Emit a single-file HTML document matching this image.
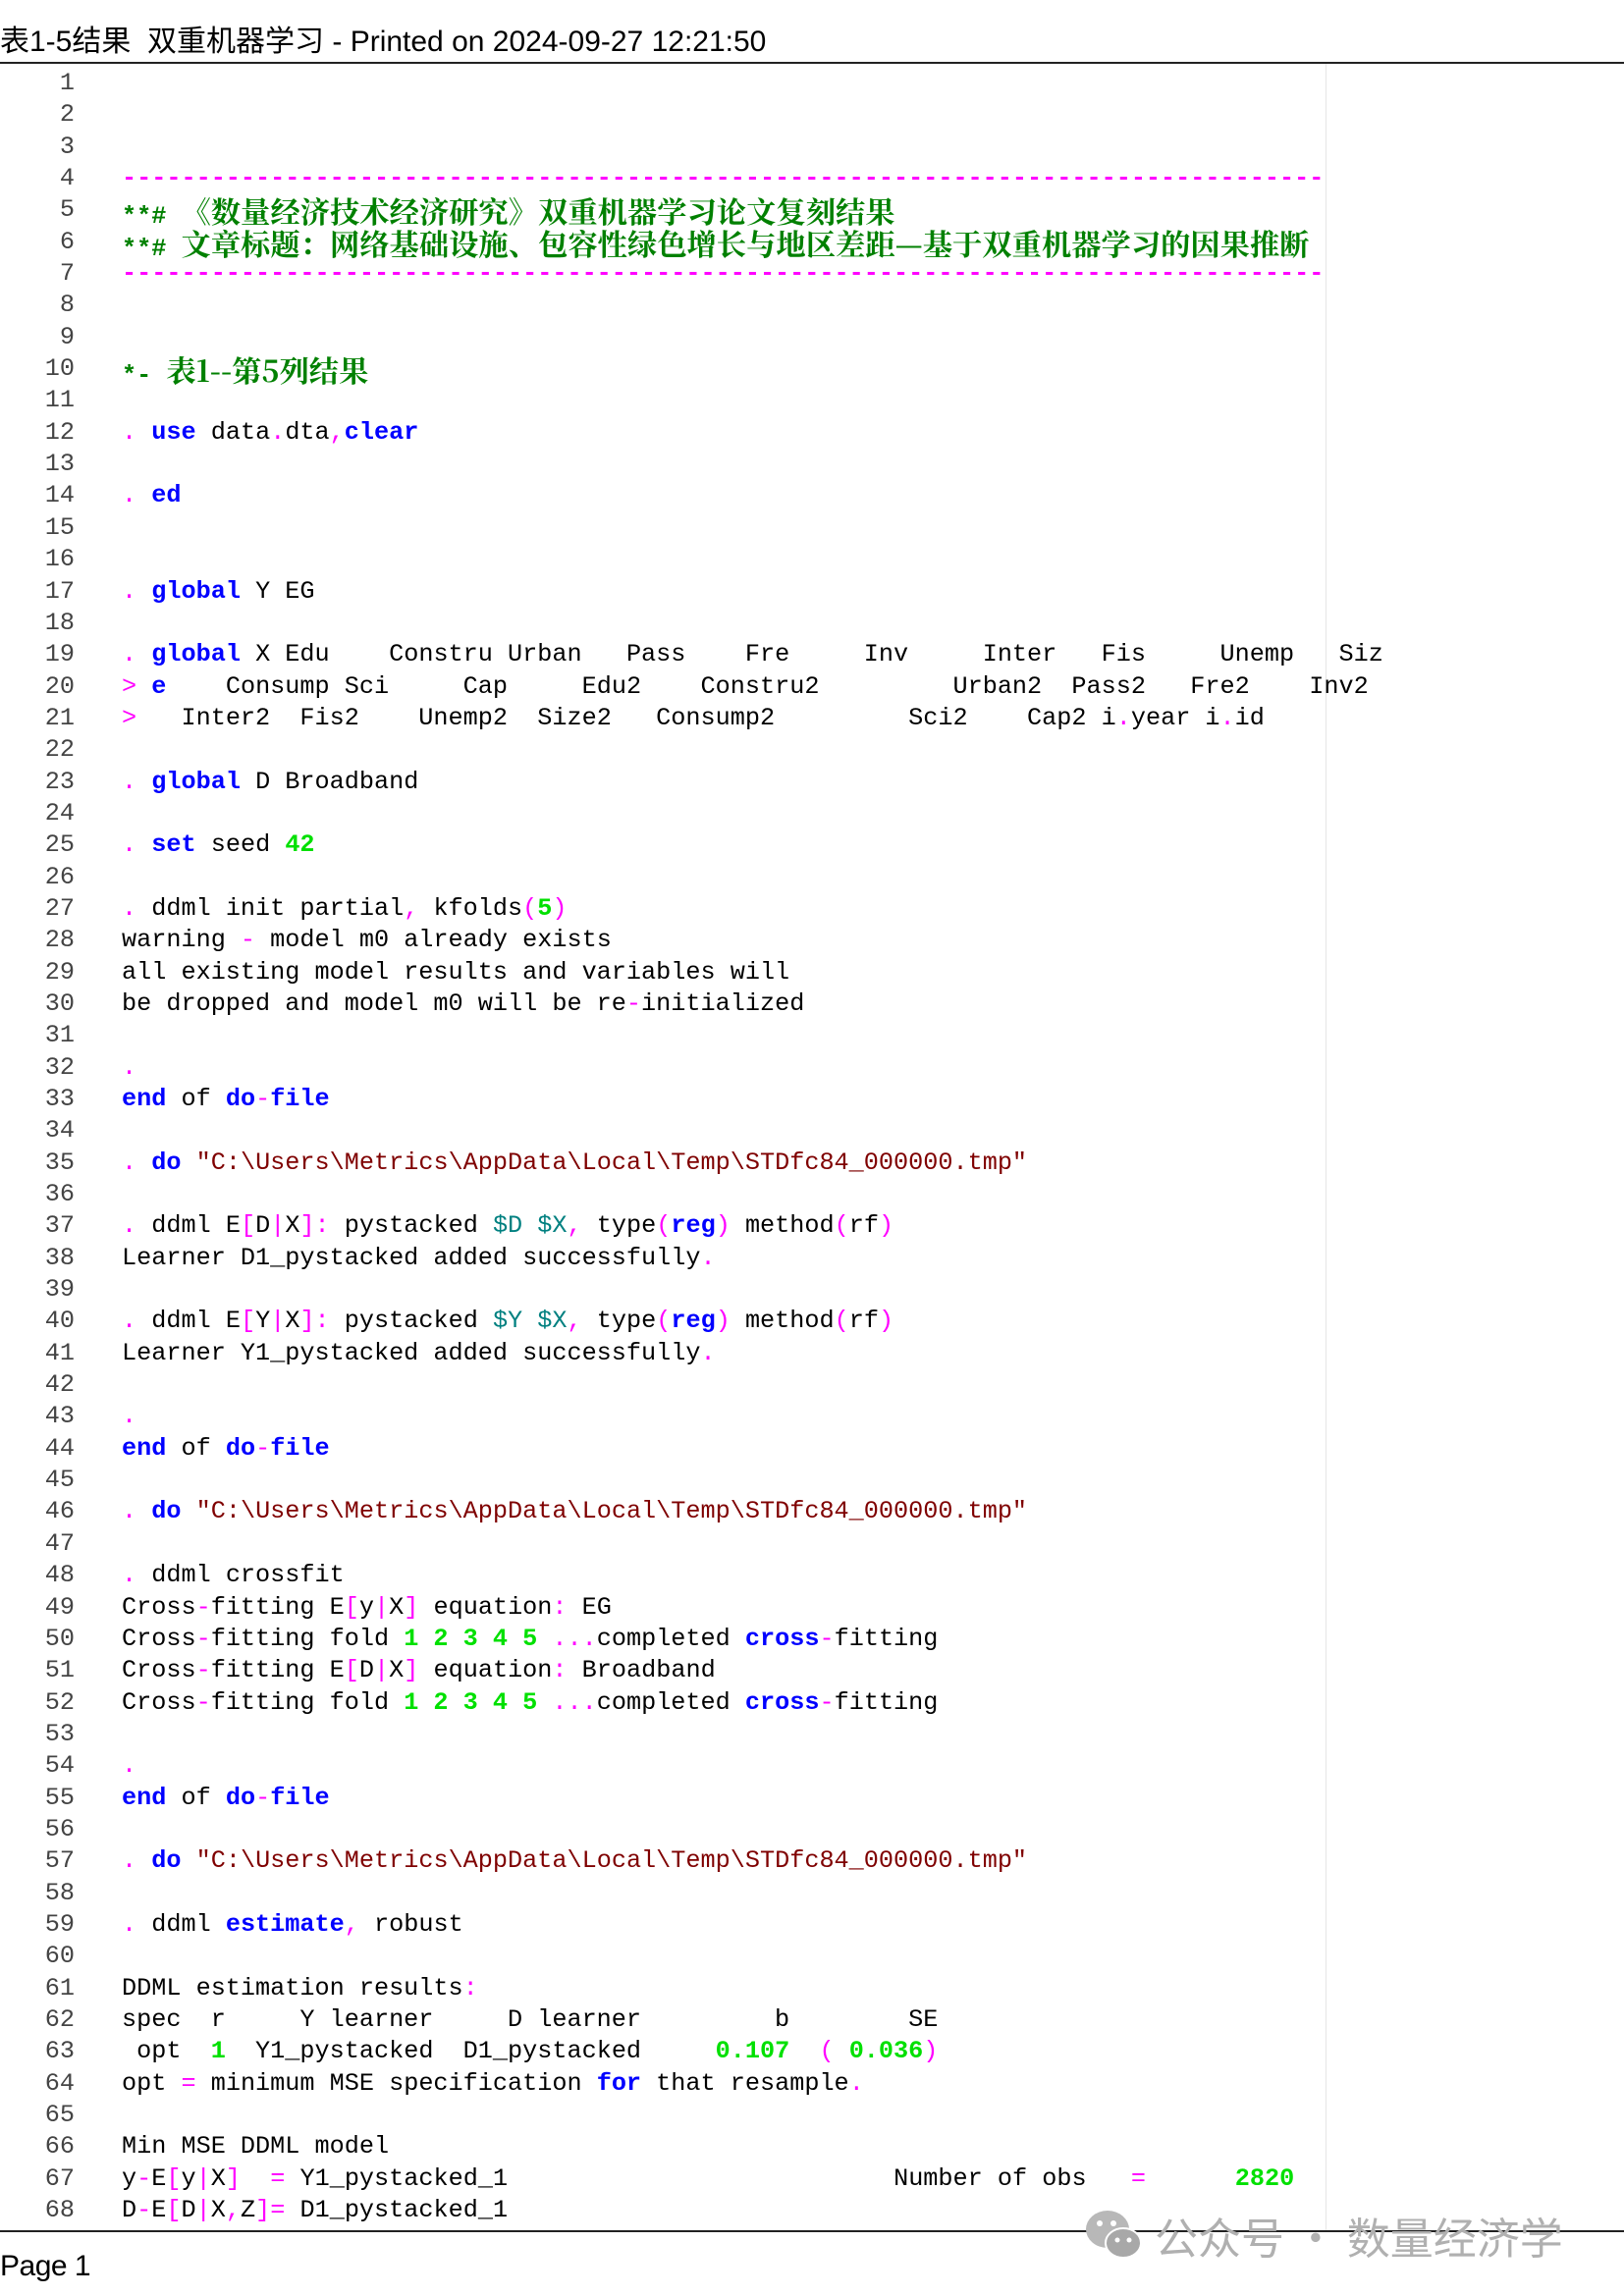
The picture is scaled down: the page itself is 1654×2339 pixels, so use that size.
<!DOCTYPE html>
<html><head><meta charset="utf-8"><style>
body{margin:0;background:#fff;width:1654px;height:2339px;position:relative;overflow:hidden}
#hd{position:absolute;left:0;top:17px;font:30px "Liberation Sans","Noto Sans CJK SC",sans-serif;color:#000;white-space:nowrap;letter-spacing:0px}
#l1{position:absolute;left:0;top:63px;width:1654px;height:2px;background:#222}
#l2{position:absolute;left:0;top:2272px;width:1654px;height:2px;background:#222}
#vl{position:absolute;left:1350px;top:65px;width:1px;height:2207px;background:#e6e6e6}
#ft{position:absolute;left:0;top:2292px;font:30px "Liberation Sans",sans-serif;letter-spacing:-0.5px}
#nums{position:absolute;left:0;top:69px;width:76px;text-align:right;font:25.2px/32.35px "Liberation Mono",monospace;color:#444;white-space:pre}
#code{position:absolute;left:124px;top:69px;font:25.2px/32.35px "Liberation Mono","Noto Sans CJK SC",monospace;color:#000;white-space:pre}
#code div{height:32.35px}
.k{color:#0000ff;font-weight:bold}
.m{color:#ff00ff}
.n{color:#00e000;font-weight:bold}
.s{color:#7f0000}
.t{color:#008080}
.c{color:#008000;font-weight:bold}
.cj{font-size:30.3px;font-family:"Noto Serif CJK SC","Noto Sans CJK SC",serif;font-weight:bold}
#wm{position:absolute;left:1104px;top:2245px;font:44px "Noto Sans CJK SC",sans-serif;color:#b0b0b0;white-space:nowrap;display:flex;align-items:center}
</style></head><body>
<div id="hd">表1-5结果&nbsp; 双重机器学习 - Printed on 2024-09-27 12:21:50</div>
<div id="l1"></div><div id="vl"></div><div id="l2"></div>
<div id="nums">1
2
3
4
5
6
7
8
9
10
11
12
13
14
15
16
17
18
19
20
21
22
23
24
25
26
27
28
29
30
31
32
33
34
35
36
37
38
39
40
41
42
43
44
45
46
47
48
49
50
51
52
53
54
55
56
57
58
59
60
61
62
63
64
65
66
67
68</div>
<div id="code"><div> </div><div> </div><div> </div><div class="m" style="font-weight:bold">---------------------------------------------------------------------------------</div><div class="c">**# <span class="cj">《数量经济技术经济研究》双重机器学习论文复刻结果</span></div><div class="c">**# <span class="cj">文章标题：网络基础设施、包容性绿色增长与地区差距—基于双重机器学习的因果推断</span></div><div class="m" style="font-weight:bold">---------------------------------------------------------------------------------</div><div> </div><div> </div><div class="c">*- <span class="cj">表1--第5列结果</span></div><div> </div><div><span class="m">.</span> <span class="k">use</span> data<span class="m">.</span>dta<span class="m">,</span><span class="k">clear</span></div><div> </div><div><span class="m">.</span> <span class="k">ed</span></div><div> </div><div> </div><div><span class="m">.</span> <span class="k">global</span> Y EG</div><div> </div><div><span class="m">.</span> <span class="k">global</span> X Edu    Constru Urban   Pass    Fre     Inv     Inter   Fis     Unemp   Siz</div><div><span class="m">&gt;</span> <span class="k">e</span>    Consump Sci     Cap     Edu2    Constru2         Urban2  Pass2   Fre2    Inv2</div><div><span class="m">&gt;</span>   Inter2  Fis2    Unemp2  Size2   Consump2         Sci2    Cap2 i<span class="m">.</span>year i<span class="m">.</span>id</div><div> </div><div><span class="m">.</span> <span class="k">global</span> D Broadband</div><div> </div><div><span class="m">.</span> <span class="k">set</span> seed <span class="n">42</span></div><div> </div><div><span class="m">.</span> ddml init partial<span class="m">,</span> kfolds<span class="m">(</span><span class="n">5</span><span class="m">)</span></div><div>warning <span class="m">-</span> model m0 already exists</div><div>all existing model results and variables will</div><div>be dropped and model m0 will be re<span class="m">-</span>initialized</div><div> </div><div><span class="m">.</span></div><div><span class="k">end</span> of <span class="k">do</span><span class="m">-</span><span class="k">file</span></div><div> </div><div><span class="m">.</span> <span class="k">do</span> <span class="s">"C:\Users\Metrics\AppData\Local\Temp\STDfc84_000000.tmp"</span></div><div> </div><div><span class="m">.</span> ddml E<span class="m">[</span>D<span class="m">|</span>X<span class="m">]:</span> pystacked <span class="t">$D $X</span><span class="m">,</span> type<span class="m">(</span><span class="k">reg</span><span class="m">)</span> method<span class="m">(</span>rf<span class="m">)</span></div><div>Learner D1_pystacked added successfully<span class="m">.</span></div><div> </div><div><span class="m">.</span> ddml E<span class="m">[</span>Y<span class="m">|</span>X<span class="m">]:</span> pystacked <span class="t">$Y $X</span><span class="m">,</span> type<span class="m">(</span><span class="k">reg</span><span class="m">)</span> method<span class="m">(</span>rf<span class="m">)</span></div><div>Learner Y1_pystacked added successfully<span class="m">.</span></div><div> </div><div><span class="m">.</span></div><div><span class="k">end</span> of <span class="k">do</span><span class="m">-</span><span class="k">file</span></div><div> </div><div><span class="m">.</span> <span class="k">do</span> <span class="s">"C:\Users\Metrics\AppData\Local\Temp\STDfc84_000000.tmp"</span></div><div> </div><div><span class="m">.</span> ddml crossfit</div><div>Cross<span class="m">-</span>fitting E<span class="m">[</span>y<span class="m">|</span>X<span class="m">]</span> equation<span class="m">:</span> EG</div><div>Cross<span class="m">-</span>fitting fold <span class="n">1 2 3 4 5</span> <span class="m">...</span>completed <span class="k">cross</span><span class="m">-</span>fitting</div><div>Cross<span class="m">-</span>fitting E<span class="m">[</span>D<span class="m">|</span>X<span class="m">]</span> equation<span class="m">:</span> Broadband</div><div>Cross<span class="m">-</span>fitting fold <span class="n">1 2 3 4 5</span> <span class="m">...</span>completed <span class="k">cross</span><span class="m">-</span>fitting</div><div> </div><div><span class="m">.</span></div><div><span class="k">end</span> of <span class="k">do</span><span class="m">-</span><span class="k">file</span></div><div> </div><div><span class="m">.</span> <span class="k">do</span> <span class="s">"C:\Users\Metrics\AppData\Local\Temp\STDfc84_000000.tmp"</span></div><div> </div><div><span class="m">.</span> ddml <span class="k">estimate</span><span class="m">,</span> robust</div><div> </div><div>DDML estimation results<span class="m">:</span></div><div>spec  r     Y learner     D learner         b        SE</div><div> opt  <span class="n">1</span>  Y1_pystacked  D1_pystacked     <span class="n">0.107</span>  <span class="m">(</span> <span class="n">0.036</span><span class="m">)</span></div><div>opt <span class="m">=</span> minimum MSE specification <span class="k">for</span> that resample<span class="m">.</span></div><div> </div><div>Min MSE DDML model</div><div>y<span class="m">-</span>E<span class="m">[</span>y<span class="m">|</span>X<span class="m">]</span>  <span class="m">=</span> Y1_pystacked_1                          Number of obs   <span class="m">=</span>      <span class="n">2820</span></div><div>D<span class="m">-</span>E<span class="m">[</span>D<span class="m">|</span>X<span class="m">,</span>Z<span class="m">]=</span> D1_pystacked_1</div></div>
<div id="wm"><svg width="60" height="56" viewBox="0 0 60 56"><ellipse cx="24" cy="22" rx="22" ry="19" fill="#b8b8b8"/><ellipse cx="40" cy="36" rx="18" ry="15" fill="#a8a8a8" stroke="#fff" stroke-width="2"/><circle cx="16" cy="16" r="3" fill="#fff"/><circle cx="30" cy="16" r="3" fill="#fff"/><circle cx="34" cy="33" r="2.5" fill="#fff"/><circle cx="46" cy="33" r="2.5" fill="#fff"/></svg><span style="margin-left:12px">公众号 · 数量经济学</span></div>
<div id="ft">Page 1</div>
</body></html>
